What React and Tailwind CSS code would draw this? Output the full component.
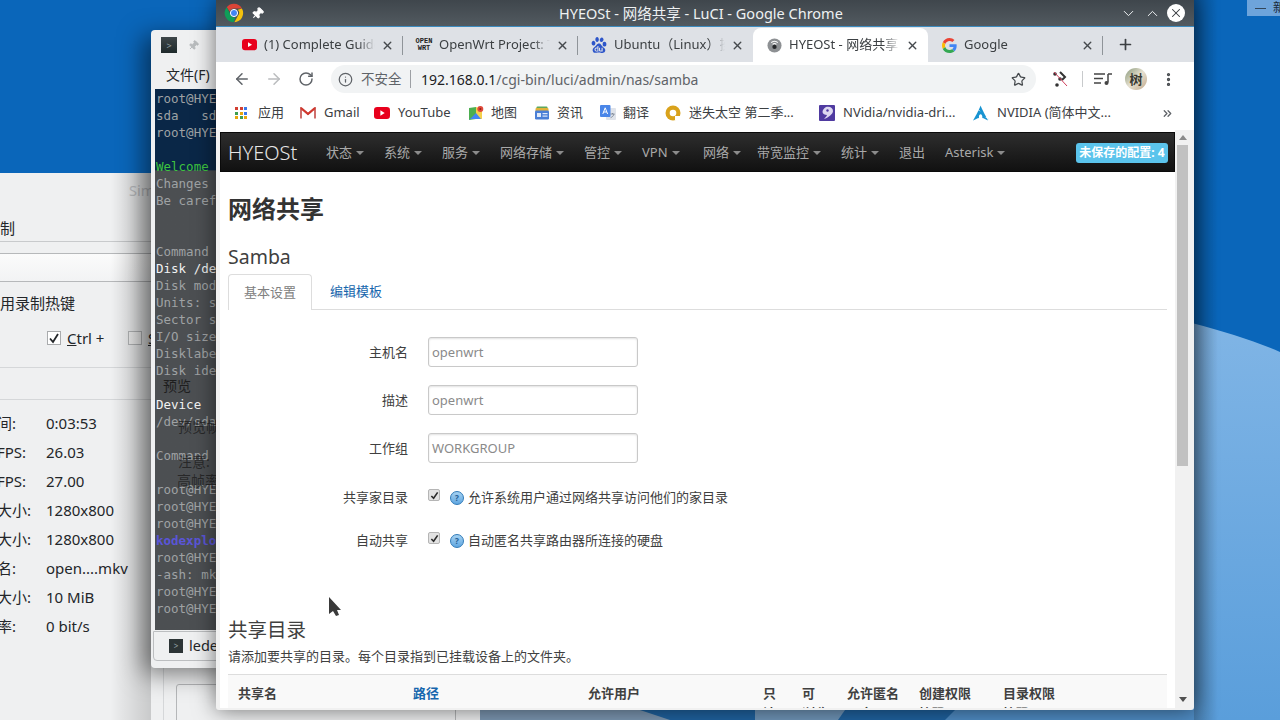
import React from 'react';
import { ArrowLeft, ArrowRight, RotateCw, Info, Star, MoreVertical, Plus, X, ChevronDown, ChevronUp, ChevronsRight, Pin } from 'lucide-react';
import { SiArchlinux, SiBaidu } from 'react-icons/si';

const sans = "[font-family:'Noto_Sans','Noto_Sans_CJK_SC',sans-serif]";

function ChromeLogo() {
  return (
    <svg width="20" height="20" viewBox="0 0 24 24">
      <path d="M12 1a11 11 0 0 1 9.500 5.500H12a5.500 5.500 0 0 0-5.200 3.600L3.300 5A11 11 0 0 1 12 1z" fill="#db4437" />
      <path d="M21.500 6.500A11 11 0 0 1 12.500 23l4.200-7.700A5.500 5.500 0 0 0 16.600 8z" fill="#f4c20d" />
      <path d="M3.300 5l4.400 8.800a5.500 5.500 0 0 0 6 3.400L11.500 23A11 11 0 0 1 3.300 5z" fill="#0f9d58" />
      <circle cx="12" cy="12" r="4.300" fill="#4285f4" stroke="#fff" strokeWidth="1.200" />
    </svg>
  );
}
function YouTube({ w = 15 }) {
  return (
    <svg width={w} height={w * 0.75} viewBox="0 0 20 15">
      <rect width="20" height="15" rx="4" fill="#e8001c" />
      <path d="M8 4.200v6.600l5.400-3.300z" fill="#fff" />
    </svg>
  );
}
function GoogleG({ s = 15 }) {
  return (
    <svg width={s} height={s} viewBox="0 0 48 48">
      <path fill="#EA4335" d="M24 9.500c3.500 0 6.700 1.300 9.100 3.500l6.800-6.800C35.800 2.400 30.300 0 24 0 14.600 0 6.500 5.400 2.600 13.200l7.900 6.100C12.400 13.700 17.700 9.500 24 9.500z" />
      <path fill="#4285F4" d="M46.900 24.500c0-1.600-.1-3.100-.4-4.500H24v9h12.900c-.6 3-2.200 5.500-4.700 7.200l7.700 6c4.500-4.200 7-10.300 7-17.700z" />
      <path fill="#FBBC05" d="M10.500 28.700c-.5-1.500-.8-3-.8-4.700s.3-3.200.8-4.700l-7.900-6.100C.9 16.500 0 20.100 0 24s.9 7.500 2.600 10.800l7.900-6.100z" />
      <path fill="#34A853" d="M24 48c6.500 0 11.900-2.100 15.900-5.800l-7.700-6c-2.200 1.400-4.900 2.300-8.200 2.300-6.300 0-11.600-4.200-13.500-9.800l-7.900 6.100C6.500 42.600 14.600 48 24 48z" />
    </svg>
  );
}
function Gmail() {
  return (
    <svg width="16" height="12" viewBox="0 0 16 12">
      <path d="M1 11.500V1l7 6 7-6v10.500" fill="none" stroke="#c9605c" strokeWidth="1.800" />
      <path d="M1 1l7 6 7-6" fill="none" stroke="#d1382e" strokeWidth="2" />
    </svg>
  );
}
function Maps() {
  return (
    <svg width="16" height="16" viewBox="0 0 16 16">
      <path d="M1 3l7-1v12l-7 1z" fill="#4caf50" />
      <path d="M8 2l6 2v10l-6 0z" fill="#f5d04c" />
      <path d="M1 15l7-7 5 6H3z" fill="#4285f4" />
      <circle cx="12.300" cy="4" r="3" fill="#e0483a" />
      <circle cx="12.300" cy="4" r="1" fill="#8d2319" />
    </svg>
  );
}
function News() {
  return (
    <svg width="16" height="16" viewBox="0 0 16 16">
      <rect x="2.500" y="1.500" width="11" height="7" rx="1" fill="#5fa85c" />
      <rect x="1.500" y="3" width="13" height="4" rx="1" fill="#e2b23a" />
      <rect x="1" y="5.500" width="14" height="9" rx="1.200" fill="#4a7fd6" />
      <rect x="3" y="8" width="4" height="4" fill="#dfe9f8" />
      <rect x="8.500" y="8" width="5" height="1.200" fill="#dfe9f8" />
      <rect x="8.500" y="10.500" width="5" height="1.200" fill="#dfe9f8" />
    </svg>
  );
}
function Translate() {
  return (
    <svg width="16" height="16" viewBox="0 0 16 16">
      <rect x="6" y="3" width="10" height="12" rx="1" fill="#dfe3ea" />
      <rect x="0" y="0" width="10.500" height="12" rx="1" fill="#4a86e8" />
      <path d="M5.200 2.800 2.800 9M5.200 2.800 7.600 9M3.700 7h3" stroke="#fff" strokeWidth="1" fill="none" />
      <path d="M10.500 9h4M12.500 8v1M14 9c-.5 2-1.800 3-3.400 3.700" stroke="#7c8696" strokeWidth=".9" fill="none" />
    </svg>
  );
}
function Qiyi() {
  return (
    <svg width="16" height="16" viewBox="0 0 16 16">
      <circle cx="8" cy="8" r="7.500" fill="#d9a21b" />
      <circle cx="8" cy="8" r="3.300" fill="#fff" />
      <path d="M10 11h5v4h-5z" fill="#fff" />
    </svg>
  );
}
function Gentoo() {
  return (
    <svg width="16" height="16" viewBox="0 0 16 16">
      <rect width="16" height="16" rx="1" fill="#4f3aa0" />
      <path d="M7 2c4-1 7 1 7 4 0 3-5 7-9 8 2-2 3-3.500 3-4-2 0-4.500-1-4.500-3C3.500 5 5 3 7 2z" fill="#ddd8f0" />
      <circle cx="8.500" cy="5.500" r="1.200" fill="#4f3aa0" />
    </svg>
  );
}
function OpenWrt() {
  return (
    <div className="flex h-[16px] w-[16px] flex-col items-center justify-center text-[#222] [font-family:'Liberation_Mono',monospace] text-[7px] font-bold leading-[7.500px]">
      <span>OPEN</span>
      <span>WRT</span>
    </div>
  );
}
function LuciIcon() {
  return (
    <svg width="15" height="15" viewBox="0 0 16 16">
      <circle cx="8" cy="8" r="7.500" fill="#8d9093" />
      <path d="M4.500 5a5 5 0 0 1 7 0M6 6.800a3 3 0 0 1 4 0" stroke="#fff" strokeWidth="1.200" fill="none" />
      <circle cx="8" cy="9.500" r="2.300" fill="#26282a" />
    </svg>
  );
}
function Caret() {
  return <span className="ml-[4px] inline-block h-0 w-0 border-x-[4px] border-t-[4px] border-x-transparent border-t-[#8b8b8b]" />;
}
function HelpDot() {
  return (
    <span className="flex h-[14px] w-[14px] shrink-0 items-center justify-center rounded-full border border-[#2f7ab8] bg-gradient-to-b from-[#a5d2f2] to-[#5fa6e0] text-[8px] font-bold leading-none text-[#1f5d94]">?</span>
  );
}
function CheckBox() {
  return (
    <span className="flex h-[12px] w-[12px] shrink-0 items-center justify-center rounded-[2px] border border-[#b5b5b5] bg-[#e2e2e2] text-[#333]">
      <svg width="9" height="9" viewBox="0 0 10 10"><path d="M1.500 5.500 4 8l4.500-6.500" fill="none" stroke="#2b2b2b" strokeWidth="1.800" /></svg>
    </span>
  );
}

const tabs = [
  { icon: <YouTube />, label: '(1) Complete Guide to' },
  { icon: <OpenWrt />, label: 'OpenWrt Project: The' },
  { icon: <SiBaidu className="text-[16px] text-[#2d55c9]" />, label: 'Ubuntu（Linux）操作' },
  { icon: <LuciIcon />, label: 'HYEOSt - 网络共享 - LuCI', active: true },
  { icon: <GoogleG />, label: 'Google' },
];
const bookmarks = [
  { icon: (
      <span className="grid grid-cols-3 gap-[1.500px]">
        {['#d23f31','#d23f31','#3b78e7','#3f9d4e','#e8a60c','#3b78e7','#e8a60c','#3f9d4e','#e8a60c'].map((c, i) => (
          <span key={i} className="h-[3px] w-[3px]" style={{ background: c }} />
        ))}
      </span>
    ), label: '应用', w: 'w-[67px]', tw: 'ml-[9px]' },
  { icon: <Gmail />, label: 'Gmail', w: 'w-[74px]', tw: 'ml-[8px]' },
  { icon: <YouTube w={16} />, label: 'YouTube', w: 'w-[94px]', tw: 'ml-[8px]' },
  { icon: <Maps />, label: '地图', w: 'w-[66px]', tw: 'ml-[7px]' },
  { icon: <News />, label: '资讯', w: 'w-[66px]', tw: 'ml-[7px]' },
  { icon: <Translate />, label: '翻译', w: 'w-[65px]', tw: 'ml-[7px]' },
  { icon: <Qiyi />, label: '迷失太空 第二季...', w: 'w-[154px]', tw: 'ml-[8px]' },
  { icon: <Gentoo />, label: 'NVidia/nvidia-dri...', w: 'w-[154px]', tw: 'ml-[8px]' },
  { icon: <SiArchlinux className="text-[16px] text-[#1793d1]" />, label: 'NVIDIA (简体中文...', w: 'w-[160px]', tw: 'ml-[8px]' },
];
const menu = [
  ['状态', 'w-[58px]'], ['系统', 'w-[58px]'], ['服务', 'w-[58px]'], ['网络存储', 'w-[84px]'], ['管控', 'w-[58px]'],
  ['VPN', 'w-[61px]'], ['网络', 'w-[54px]'], ['带宽监控', 'w-[84px]'], ['统计', 'w-[58px]'], ['退出', 'w-[46px]', true], ['Asterisk', 'w-[70px]'],
];
const fields = [['主机名', 'openwrt'], ['描述', 'openwrt'], ['工作组', 'WORKGROUP']];
const checks = [
  ['共享家目录', '允许系统用户通过网络共享访问他们的家目录'],
  ['自动共享', '自动匿名共享路由器所连接的硬盘'],
];
const headers = [
  [['共享名'], 'w-[175px]'], [['路径'], 'w-[175px] text-[#1666ad]'], [['允许用户'], 'w-[175px]'], [['只', '读'], 'w-[39px]'],
  [['可', '浏览'], 'w-[45px]'], [['允许匿名', '用户'], 'w-[72px]'], [['创建权限', '掩码'], 'w-[84px]'], [['目录权限', '掩码'], 'w-[90px]'],
];
const termLines = [
  ['root@HYEOSt:~# lsblk', ''], ['sda   sda1', ''], ['root@HYEOSt:~#', ''], [' ', ''],
  ['Welcome to fdisk', 'text-[#3fc43f]'], ['Changes will remain', ''], ['Be careful before', ''], [' ', ''], [' ', ''],
  ['Command (m for help)', ''], ['Disk /dev/sda', 'text-[#f2f2f2]'], ['Disk model', ''], ['Units: sectors', ''], ['Sector size', ''],
  ['I/O size', ''], ['Disklabel', ''], ['Disk identifier', ''], [' ', ''], ['Device', 'text-[#f2f2f2]'], ['/dev/sda1', ''], [' ', ''],
  ['Command', ''], [' ', ''], ['root@HYEOSt', ''], ['root@HYEOSt', ''], ['root@HYEOSt', ''], ['kodexplorer', 'text-[#5a55d8] font-bold'],
  ['root@HYEOSt', ''], ['-ash: mkdir', ''], ['root@HYEOSt', ''], ['root@HYEOSt', ''],
];
const stats = [
  ['间:', '0:03:53'], ['FPS:', '26.03'], ['FPS:', '27.00'], ['大小:', '1280x800'], ['大小:', '1280x800'], ['名:', 'open....mkv'], ['大小:', '10 MiB'], ['率:', '0 bit/s'],
];

function Recorder() {
  return (
    <div className={`absolute left-0 top-[173px] flex h-[560px] w-[480px] flex-col bg-[#eff0f1] text-[#232629] ${sans}`}>
      <div className="pl-[129px] pt-[7px] text-[14.500px] leading-[20px] text-[#c4c6c9]">SimpleScreenRecorder</div>
      <div className="mt-[16px] flex h-[26px] items-center border-b border-[#c8cacc] pb-[1px] text-[15px]">制</div>
      <div className="mt-[11px] h-[29px] border-y border-[#b6b8ba] bg-gradient-to-b from-[#fbfbfb] to-[#f2f3f4]" />
      <div className="mt-[9px] text-[15px] leading-[24px]">用录制热键</div>
      <div className="mt-[12px] flex items-center text-[15px]">
        <span className="ml-[47px] flex h-[14px] w-[14px] items-center justify-center border border-[#a9abad] bg-white">
          <svg width="12" height="12" viewBox="0 0 12 12"><path d="M2 6.500 5 10l5-8" fill="none" stroke="#232629" strokeWidth="1.800" /></svg>
        </span>
        <span className="ml-[6px] w-[61px]"><span className="underline">C</span>trl +</span>
        <span className="h-[14px] w-[14px] border border-[#b8babc] bg-[#f5f5f5]" />
        <span className="ml-[6px]"><span className="underline">S</span>hift +</span>
      </div>
      <div className="mt-[17px] h-[33px] border-y border-[#d5d7d9]" />
      <div className="mt-[9px] flex flex-col">
        {stats.map(([k, v], i) => (
          <div key={i} className="flex h-[29px] items-center text-[15px]">
            <span className="ml-[-3px] w-[49px] whitespace-nowrap">{k}</span>
            <span>{v}</span>
          </div>
        ))}
      </div>
      <div className="absolute left-[176px] top-[511px] h-[40px] w-[280px] rounded-[3px] border border-[#b5b7b9] bg-[#eff0f1]" />
      <div className="absolute left-[163px] top-[380px] h-[200px] w-px bg-[#d5d7d9]" />
    </div>
  );
}

function Terminal() {
  return (
    <div className={`absolute left-[151px] top-[30px] flex h-[638px] w-[90px] flex-col rounded-[4px] bg-[#eff0f1] shadow-[-8px_6px_24px_rgba(0,0,0,0.5)] ${sans}`}>
      <div className="flex h-[30px] items-center pl-[10px]">
        <span className="flex h-[16px] w-[16px] items-center justify-center bg-gradient-to-b from-[#3e4649] to-[#1f2a2c] text-[9px] leading-none text-[#9aa4a6]">&gt;</span>
        <Pin size={11} className="ml-[11px] rotate-45 fill-[#b9bcbe] text-[#b9bcbe]" />
      </div>
      <div className="flex h-[29px] items-center pl-[15px] text-[14px] text-[#232629]">文件(F)</div>
      <div className="mx-[4px] h-[541px] overflow-hidden bg-gradient-to-b from-[#0a2747] from-[15%] to-[#4c4f52] to-[15.100%] pl-[1px] pt-[1px] whitespace-pre [font-family:'DejaVu_Sans_Mono',monospace] text-[12.500px] leading-[17px] text-[#9fa2a4]">
        {termLines.map(([t, c], i) => (
          <div key={i} className={`h-[17px] ${c}`}>{t}</div>
        ))}
      </div>
      <div className="mx-[2px] mt-[1px] flex h-[30px] items-center rounded-b-[4px] border border-[#bcbec0] pl-[15px] text-[14.500px] text-[#232629]">
        <span className="mr-[6px] flex h-[14px] w-[14px] items-center justify-center bg-[#2c3436] text-[8px] leading-none text-[#9aa4a6]">&gt;</span>
        lede
      </div>
    </div>
  );
}

function Chrome() {
  return (
    <div className={`absolute left-[216px] top-0 flex h-[710px] w-[978px] flex-col rounded-b-[3px] bg-[#f1f1f1] shadow-[0_0_22px_rgba(0,0,0,0.55)] ${sans}`}>
      <div className="flex h-[27px] items-center border-b border-[#3d8cc0] bg-gradient-to-b from-[#3f464c] to-[#525a60] pl-[8px] text-[#eef1f2]">
        <ChromeLogo />
        <Pin size={13} className="ml-[7px] rotate-45 fill-white text-white" />
        <div className="ml-[295px] w-[292px] whitespace-nowrap text-[14.500px] leading-[20px]">HYEOSt - 网络共享 - LuCI - Google Chrome</div>
        <ChevronDown size={17} strokeWidth={1.400} className="ml-[269px]" />
        <ChevronUp size={17} strokeWidth={1.400} className="ml-[7px]" />
        <span className="ml-[6px] flex h-[18px] w-[18px] items-center justify-center rounded-full bg-white text-[#33383c]">
          <X size={14} strokeWidth={1.800} />
        </span>
      </div>
      <div className="flex h-[35px] items-end bg-[#dee1e6] pl-[12px]">
        {tabs.map((t, i) => (
          <div key={i} className={`relative flex h-[34px] w-[175px] items-center pl-[13px] pr-[9px] ${t.active ? 'rounded-t-[8px] bg-white' : ''}`}>
            <span className="flex w-[16px] shrink-0 items-center justify-center">{t.icon}</span>
            <span className="ml-[7px] w-[111px] flex-none overflow-hidden whitespace-nowrap text-[13px] text-[#3c4043] [mask-image:linear-gradient(to_right,black_85%,transparent)]">{t.label}</span>
            <X size={13} strokeWidth={2.600} className="ml-auto text-[#45494d]" />
            {!t.active && i !== 2 && <span className="absolute right-0 top-[8px] h-[19px] w-px bg-[#8f9499]" />}
          </div>
        ))}
        <Plus size={17} strokeWidth={2.400} className="mb-[9px] ml-[14px] text-[#3c4043]" />
      </div>
      <div className="flex h-[34px] items-center bg-white pl-[17px] text-[#5f6368]">
        <ArrowLeft size={18} strokeWidth={2} />
        <ArrowRight size={18} strokeWidth={2} className="ml-[14px] text-[#babcbe]" />
        <RotateCw size={16} strokeWidth={2.200} className="ml-[15px]" />
        <div className="ml-[17px] flex h-[28px] w-[705px] items-center rounded-full bg-[#f1f3f4] pl-[7px] text-[14px]">
          <Info size={15} strokeWidth={2} />
          <span className="ml-[8px] w-[42px] text-[13.500px] text-[#5f6368]">不安全</span>
          <span className="ml-[7px] h-[18px] w-px bg-[#9da0a4]" />
          <span className="ml-[10px] whitespace-nowrap"><span className="text-[#202124]">192.168.0.1</span>/cgi-bin/luci/admin/nas/samba</span>
          <Star size={15} strokeWidth={2} className="ml-auto mr-[10px] text-[#45494d]" />
        </div>
        <svg width="18" height="18" viewBox="0 0 18 18" className="ml-[15px]">
          <circle cx="4" cy="4" r="1.800" fill="#333" /><circle cx="9" cy="9" r="1.800" fill="#333" /><circle cx="6" cy="15" r="1.800" fill="#333" />
          <path d="M9 2l5 5-3 3" fill="none" stroke="#333" strokeWidth="2" />
          <path d="M3 2l13 14" stroke="#d23f5c" strokeWidth="1" />
        </svg>
        <span className="ml-[13px] h-[16px] w-px bg-[#c8cacc]" />
        <svg width="18" height="14" viewBox="0 0 18 14" className="ml-[11px]">
          <path d="M0 2h11M0 6.500h9M0 11h7" stroke="#444" strokeWidth="1.500" />
          <path d="M14 2v8.500" stroke="#444" strokeWidth="1.500" />
          <path d="M14 2h4" stroke="#444" strokeWidth="1.500" />
          <circle cx="12.500" cy="11" r="2" fill="#444" />
        </svg>
        <span className="ml-[13px] flex h-[22px] w-[22px] items-center justify-center rounded-full bg-gradient-to-br from-[#8a9a7c] via-[#e6e0d0] to-[#c2a98c] text-[13px] font-bold leading-none text-[#3a3a32]">树</span>
        <MoreVertical size={17} strokeWidth={2.600} className="ml-[13px] text-[#45494d]" />
      </div>
      <div className="flex h-[34px] items-center bg-white pl-[17px] text-[13px] text-[#3c4043]">
        {bookmarks.map((b, i) => (
          <div key={i} className={`flex items-center whitespace-nowrap ${b.w}`}>
            <span className="flex w-[16px] shrink-0 items-center justify-center">{b.icon}</span>
            <span className={b.tw}>{b.label}</span>
          </div>
        ))}
        <ChevronsRight size={13} strokeWidth={2.400} className="ml-[28px] text-[#5f6368]" />
      </div>
      <div className="flex h-[578px] overflow-hidden pl-[4px] pr-[4px]">
        <div className="w-[955px] overflow-hidden bg-white pt-[2px]">
          <Page />
        </div>
        <div className="flex w-[15px] flex-col items-center bg-[#f1f1f1] pt-[3px]">
          <span className="mt-[2px] h-0 w-0 border-x-[4px] border-b-[5px] border-x-transparent border-b-[#8a8a8a]" />
          <span className="mt-[5px] h-[321px] w-[11px] bg-[#c1c1c1]" />
          <span className="mt-auto mb-[6px] h-0 w-0 border-x-[4px] border-t-[5px] border-x-transparent border-t-[#505050]" />
        </div>
      </div>
    </div>
  );
}

function Page() {
  return (
    <div className="text-[13px] text-[#404040]">
      <div className="flex h-[40px] items-center border border-[#0a0a0a] bg-gradient-to-b from-[#2e2e2e] to-[#111] pl-[7px] pr-[6px] pt-[1px] text-[#a9a9a9]">
        <span className="w-[98px] text-[20px] font-light text-[#e6e6e6]">HYEOSt</span>
        {menu.map(([m, w, nc]) => (
          <span key={m} className={`flex items-center ${w}`}>
            {m}
            {!nc && <Caret />}
          </span>
        ))}
        <span className="ml-auto flex h-[20px] w-[92px] items-center justify-center rounded-[3px] bg-[#5bc4ec] text-[12px] font-bold text-white">未保存的配置: 4</span>
      </div>
      <div className="px-[8px]">
        <h2 className="mt-[20px] text-[24px] font-bold leading-[34px] text-[#333]">网络共享</h2>
        <h3 className="mt-[17px] text-[19.500px] leading-[28px]">Samba</h3>
        <div className="mt-[3px] flex h-[36px] border-b border-[#dddddd]">
          <span className="flex h-[36px] w-[84px] items-center justify-center rounded-t-[4px] border border-b-0 border-[#dddddd] bg-white text-[#808080]">基本设置</span>
          <span className="ml-[18px] flex items-center pt-[1px] text-[#1666ad]">编辑模板</span>
        </div>
        <div className="mt-[27px] flex flex-col gap-[18px]">
          {fields.map(([l, v]) => (
            <div key={l} className="flex h-[30px] items-center">
              <span className="w-[180px] pt-[2px] text-right">{l}</span>
              <span className="ml-[20px] flex h-[30px] w-[210px] items-center rounded-[3px] border border-[#c9c9c9] pl-[3px] pt-[2px] text-[#8a8a8a] shadow-[inset_0_1px_2px_rgba(0,0,0,0.12)]">{v}</span>
            </div>
          ))}
        </div>
        <div className="mt-[19px] flex flex-col">
          {checks.map(([l, d]) => (
            <div key={l} className="flex h-[43px] items-start pt-[6px]">
              <span className="w-[180px] text-right leading-[18px]">{l}</span>
              <span className="ml-[20px] mt-[1px]"><CheckBox /></span>
              <span className="ml-[10px] mt-[3px]"><HelpDot /></span>
              <span className="ml-[4px] mt-[-1px] leading-[20px]">{d}</span>
            </div>
          ))}
        </div>
        <h3 className="mt-[48px] text-[19.500px] leading-[28px]">共享目录</h3>
        <p className="mt-[2px] leading-[20px]">请添加要共享的目录。每个目录指到已挂载设备上的文件夹。</p>
        <div className="mt-[8px] flex border-t border-[#dddddd] bg-[#f9f9f9] pl-[10px] pt-[8px] font-bold leading-[20px]">
          {headers.map(([h, w]) => (
            <span key={h[0]} className={`flex flex-col ${w}`}>
              {h.map((line) => <span key={line}>{line}</span>)}
            </span>
          ))}
        </div>
      </div>
    </div>
  );
}

export default function App() {
  return (
    <div className="relative h-[720px] w-[1280px] overflow-hidden bg-[#0b66b8]">
      <svg width="1280" height="720" viewBox="0 0 1280 720" className="absolute left-0 top-0">
        <defs>
          <linearGradient id="wave" x1="0" y1="0" x2="0" y2="1">
            <stop offset="0" stopColor="#82b6e6" />
            <stop offset="1" stopColor="#5a9edb" />
          </linearGradient>
        </defs>
        <rect width="1280" height="720" fill="#0a66ba" />
        <path d="M1100 300C1170 318 1230 330 1280 352V720H1100z" fill="url(#wave)" />
        <path d="M480 720V710H1194V720z" fill="#1f629f" />
        <path d="M480 710H640L670 720H480z" fill="#7c97b2" />
        <path d="M755 710H845L838 720H755z" fill="#6f95b8" />
        <path d="M955 710H1194V720H945z" fill="#4f8cc4" />
      </svg>
      <div className={`absolute left-[1247px] top-0 flex h-[16px] w-[33px] items-center overflow-hidden whitespace-nowrap bg-[#6ea4db] pl-[8px] text-[12px] text-[#1a2a3a] ${sans}`}>
        <span className="mr-[7px] h-[1px] w-[11px] shrink-0 bg-[#33465a]" />新
      </div>
      <Recorder />
      <div className="absolute left-[110px] top-[173px] h-[560px] w-[41px] bg-gradient-to-r from-transparent to-[rgba(0,0,0,0.16)]" />
      <Terminal />
      <div className={`absolute left-[163px] top-[376px] text-[14px] leading-[20px] text-[#1e1e1e] ${sans}`}>预览</div>
      <div className={`absolute left-[178px] top-[417px] text-[14px] leading-[20px] text-[#1e1e1e]/80 ${sans}`}>预览帧</div>
      <div className={`absolute left-[178px] top-[452px] text-[14px] leading-[20px] text-[#1e1e1e]/80 ${sans}`}>注意:</div>
      <div className={`absolute left-[177px] top-[471px] text-[14px] leading-[20px] text-[#1e1e1e]/80 ${sans}`}>高帧率</div>
      <div className="absolute left-[1194px] top-0 h-[720px] w-[24px] bg-gradient-to-r from-[rgba(0,0,0,0.25)] to-transparent" />
      <Chrome />
      <svg width="13" height="21" viewBox="0 0 13 21" className="absolute left-[328px] top-[597px]">
        <path d="M1 0v17l4-3 3 5 3-1-2-5h4z" fill="#3a3a3a" />
      </svg>
    </div>
  );
}
